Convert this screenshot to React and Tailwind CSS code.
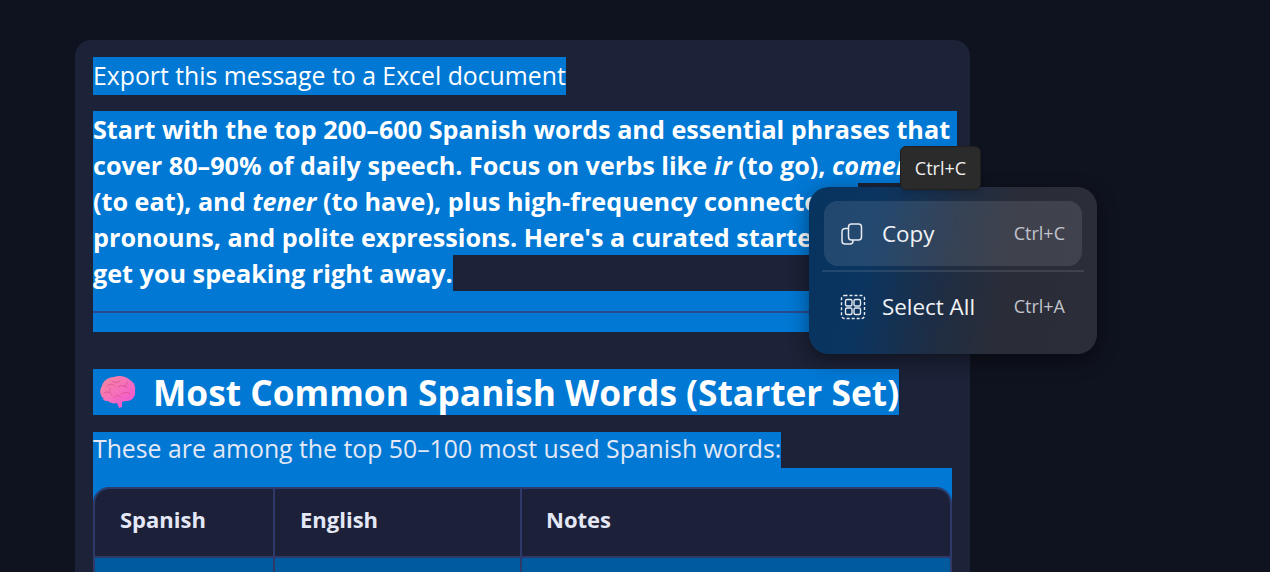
const bodyFont = "font-['Open_Sans','Noto_Sans',sans-serif]";

function Line({ children, className = '' }) {
  return (
    <div className={`w-fit whitespace-pre bg-[#0078d4] text-white ${className}`}>{children}</div>
  );
}

function BrainIcon() {
  return (
    <svg width="38" height="34" viewBox="0 0 38 34" className="shrink-0">
      <defs>
        <linearGradient id="brain" x1="0" y1="0" x2="1" y2="1">
          <stop offset="0" stopColor="#f58a9a" />
          <stop offset="0.55" stopColor="#f56cc0" />
          <stop offset="1" stopColor="#f04fd8" />
        </linearGradient>
      </defs>
      <path
        d="M5 24C1 21 0 15 3 11 4 6 9 2 15 2c5-2 12-1 16 3 4 2 6 7 5 11 1 5-3 10-8 10-2 0-3 0-5 1l0 5-3 1-2-5c-3 1-7 0-9-2-2 0-4 0-5-2z"
        fill="url(#brain)"
      />
      <path
        d="M8 11c3-3 6-2 8 0M13 6c2 2 6 2 8 0M5 18c3-2 6-1 8 2M19 12c3-2 7-2 10 1M22 19c3-2 7-2 9 0M15 23c2-3 5-3 7-1M28 7c0 2-1 4-3 5M11 13c1 2 0 3-1 4"
        fill="none"
        stroke="#d9508f"
        strokeWidth="0.8"
        strokeLinecap="round"
      />
    </svg>
  );
}

function CopyIcon() {
  return (
    <svg width="24" height="24" viewBox="0 0 24 24" fill="none" stroke="#e8eaf0" strokeWidth="1.5">
      <rect x="8.5" y="2" width="13" height="16" rx="3" />
      <path d="M8.5 6.5H5a3 3 0 0 0-3 3V19a3 3 0 0 0 3 3h5a3 3 0 0 0 3-3v-1" />
    </svg>
  );
}

function SelectAllIcon() {
  return (
    <svg width="26" height="26" viewBox="0 0 26 26" fill="none" stroke="#e8eaf0" strokeWidth="1.4">
      <rect x="1.5" y="1.5" width="23" height="23" rx="3" strokeDasharray="3 2" />
      <rect x="5.5" y="5.5" width="6.5" height="6.5" rx="1.5" />
      <rect x="14" y="5.5" width="6.5" height="6.5" rx="1.5" />
      <rect x="5.5" y="14" width="6.5" height="6.5" rx="1.5" />
      <rect x="14" y="14" width="6.5" height="6.5" rx="1.5" />
    </svg>
  );
}

function MenuRow({ icon, label, shortcut, active }) {
  return (
    <div className={`flex h-[65px] items-center rounded-[14px] pl-4 pr-[17px] ${active ? 'bg-white/10' : ''}`}>
      <div className="flex w-[42px] justify-start">{icon}</div>
      <span className="flex-1 text-[22.4px] text-[#f1f2f6]">{label}</span>
      <span className="text-[18px] text-[#c2c4cc]">{shortcut}</span>
    </div>
  );
}

export default function App() {
  return (
    <div className={`relative h-[572px] w-[1270px] overflow-hidden bg-[#0f131f] ${bodyFont}`}>
      <div className="ml-[75px] mt-10 h-[532px] w-[895px] rounded-t-2xl bg-[#1c2237] pl-[18px] pt-[17px]">
        <Line className="h-[38px] text-[24.8px] leading-[36px]">Export this message to a Excel document</Line>

        <div className="mt-4 text-[25.2px] font-bold leading-9">
          <Line>{'Start with the top 200–600 Spanish words and essential phrases that '}</Line>
          <Line>
            {'cover 80–90% of daily speech. Focus on verbs like '}
            <em>ir</em>
            {' (to go), '}
            <em>comer </em>
          </Line>
          <Line>
            {'(to eat), and '}
            <em>tener</em>
            {' (to have), plus high-frequency connectors, '}
          </Line>
          <Line>{"pronouns, and polite expressions. Here's a curated starter list to "}</Line>
          <Line>get you speaking right away.</Line>
        </div>

        <div className="flex h-[41px] w-[865px] items-center bg-[#0078d4]">
          <div className="h-0.5 w-full bg-[#2b4a8c]" />
        </div>

        <Line className="mt-[37px] flex h-[46px] w-[808px] items-center gap-[16px] pl-[6px] text-[35.3px] font-bold leading-[46px]">
          <BrainIcon />
          <span>Most Common Spanish Words (Starter Set)</span>
        </Line>

        <Line className="mt-[17px] h-9 text-[24.8px] leading-[32px] !text-[#e4e8f6]">These are among the top 50–100 most used Spanish words:</Line>

        <div className="w-[859px] bg-[#0078d4] pt-[19px]">
          <div className="grid grid-cols-[180px_247px_1fr] overflow-hidden rounded-t-2xl border-x-2 border-t-2 border-[#2f3a6b] text-[22px] font-bold text-[#e4e8f6]">
            <div className="flex h-[69px] items-center border-b-2 border-r-2 border-[#2f3a6b] bg-[#1c2038] pb-[6px] pl-[25px]">Spanish</div>
            <div className="flex h-[69px] items-center border-b-2 border-r-2 border-[#2f3a6b] bg-[#1c2038] pb-[6px] pl-[25px]">English</div>
            <div className="flex h-[69px] items-center border-b-2 border-[#2f3a6b] bg-[#1c2038] pb-[6px] pl-6">Notes</div>
            <div className="h-10 border-r-2 border-[#2f3a6b] bg-[#005a9e]" />
            <div className="h-10 border-r-2 border-[#2f3a6b] bg-[#005a9e]" />
            <div className="h-10 bg-[#005a9e]" />
          </div>
        </div>
      </div>

      <div className="absolute left-[809px] top-[187px] h-[167px] w-[288px] rounded-[20px] bg-[linear-gradient(100deg,#07335f_0%,#0b3560_22%,#1f2d43_48%,#2a2d38_68%,#2b2e39_100%)] px-[15px] pt-[14px] shadow-[0_6px_20px_rgba(0,0,0,0.45)]">
        <MenuRow icon={<CopyIcon />} label="Copy" shortcut="Ctrl+C" active />
        <div className="mx-[-2px] mt-1 h-0.5 bg-white/10" />
        <div className="mt-[2px]">
          <MenuRow icon={<SelectAllIcon />} label="Select All" shortcut="Ctrl+A" />
        </div>
      </div>

      <div className="absolute left-[900px] top-[146px] flex h-[44px] w-[81px] items-center justify-center rounded-md border border-[#1f1f1f] bg-[#2b2b2b] text-[18px] text-[#f0f0f0] shadow-md">
        Ctrl+C
      </div>
    </div>
  );
}
